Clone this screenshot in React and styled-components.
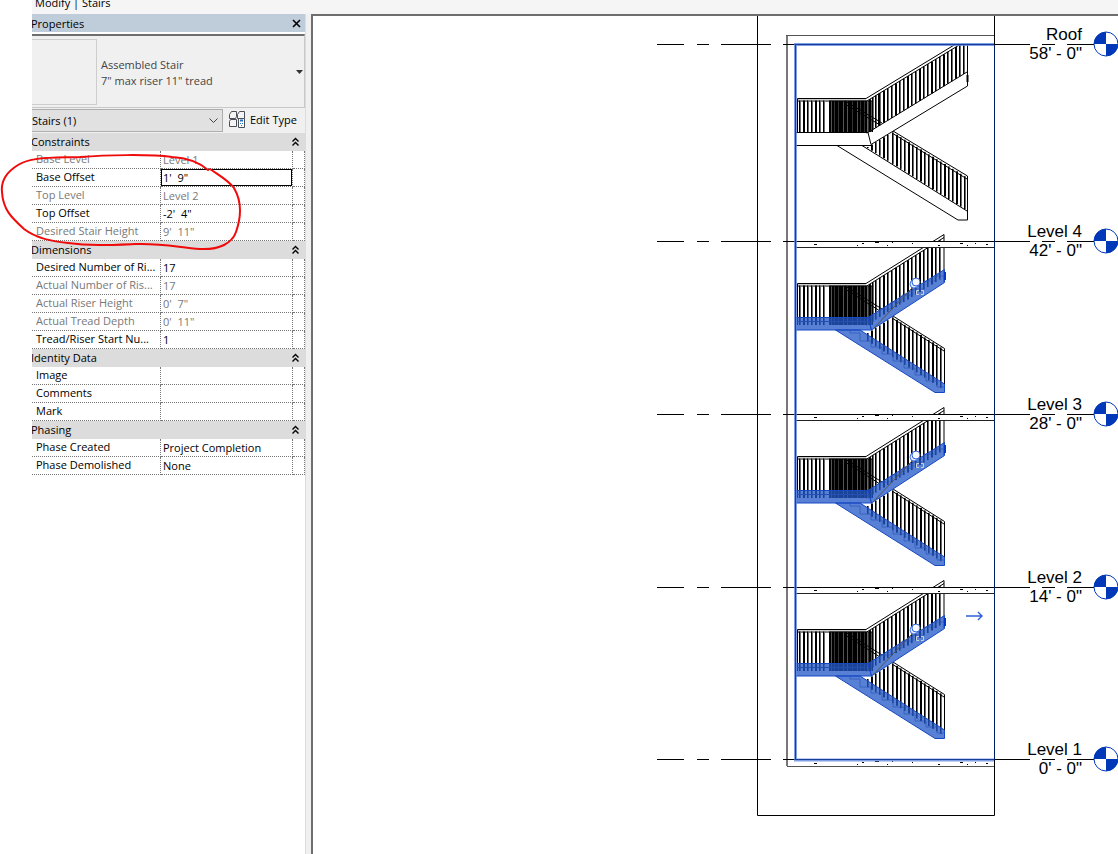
import React from 'react'
import styled, { createGlobalStyle } from 'styled-components'

//data
const groups = [
    {
        name: 'Constraints',
        rows: [
            { label: 'Base Level', value: 'Level 1', locked: true },
            { label: 'Base Offset', value: "1'  9\"", active: true },
            { label: 'Top Level', value: 'Level 2', locked: true },
            { label: 'Top Offset', value: "-2'  4\"" },
            { label: 'Desired Stair Height', value: "9'  11\"", locked: true },
        ],
    },
    {
        name: 'Dimensions',
        rows: [
            { label: 'Desired Number of Ri...', value: '17' },
            { label: 'Actual Number of Ris...', value: '17', locked: true },
            { label: 'Actual Riser Height', value: "0'  7\"", locked: true },
            { label: 'Actual Tread Depth', value: "0'  11\"", locked: true },
            { label: 'Tread/Riser Start Nu...', value: '1' },
        ],
    },
    {
        name: 'Identity Data',
        rows: [
            { label: 'Image', value: '' },
            { label: 'Comments', value: '' },
            { label: 'Mark', value: '' },
        ],
    },
    {
        name: 'Phasing',
        rows: [
            { label: 'Phase Created', value: 'Project Completion' },
            { label: 'Phase Demolished', value: 'None' },
        ],
    },
]

const levels = [
    { name: 'Roof', height: "58' - 0\"", y: 44 },
    { name: 'Level 4', height: "42' - 0\"", y: 241 },
    { name: 'Level 3', height: "28' - 0\"", y: 414 },
    { name: 'Level 2', height: "14' - 0\"", y: 587 },
    { name: 'Level 1', height: "0' - 0\"", y: 759 },
]

//styled components
const GlobalStyle = createGlobalStyle`
    * {
        box-sizing: border-box;
    }
    body {
        margin: 0;
        background: #fff;
        color: #000;
        font-family: 'Open Sans', 'Noto Sans', sans-serif;
        font-size: 11px;
        overflow: hidden;
    }
`

const Page = styled.div`
    position: relative;
    min-height: 100vh;
    padding-left: 32px;
    display: flex;
    flex-direction: column;
`

const ModeBar = styled.div`
    height: 14px;
    flex: none;
    padding: 0 0 4px 3px;
    background: #f5f5f5;
    line-height: 14px;
    display: flex;
    align-items: flex-end;
    overflow: hidden;
`

const Workspace = styled.div`
    flex: 1;
    display: flex;
    align-items: stretch;
    background: #f0f0f0;
`

const Palette = styled.section`
    width: 274px;
    flex: none;
    display: flex;
    flex-direction: column;
    background: #fff;
    border-right: 1px solid #dcdcdc;
`

const TitleBar = styled.header`
    height: 18px;
    display: flex;
    align-items: center;
    justify-content: space-between;
    padding-right: 4px;
    background: #bfcddb;
    overflow: hidden;
`

const Title = styled.h1`
    margin: 0 0 0 -1px;
    font-size: inherit;
    font-weight: 400;
`

const IconButton = styled.button`
    display: flex;
    padding: 0;
    border: 0;
    background: none;
    color: inherit;
`

const TypeSelector = styled.div`
    height: 74px;
    margin-top: 2px;
    display: flex;
    align-items: center;
    gap: 4px;
    padding-right: 1px;
    background: #f0f0f0;
    border: solid #c8c8c8;
    border-width: 0 1px 1px 0;
    border-top: 2px solid #6e6e6e;
`

const Preview = styled.div`
    width: 65px;
    height: 66px;
    border: 1px solid #cdcdcd;
    border-left: 0;
`

const TypeName = styled.div`
    flex: 1;
    padding-top: 2px;
    line-height: 16px;
    color: #444;
`

const FilterRow = styled.div`
    height: 25px;
    display: flex;
    align-items: center;
    gap: 6px;
    background: #f0f0f0;
`

const SelectBox = styled.div`
    width: 191px;
    height: 23px;
    display: flex;
    align-items: center;
    padding-right: 4px;
    background: #e1e1e1;
    border: 1px solid #adadad;
    border-left: 0;
`

const Select = styled.select`
    flex: 1;
    appearance: none;
    border: 0;
    padding: 0;
    background: none;
    color: inherit;
    font: inherit;
`

const EditType = styled.button`
    display: flex;
    align-items: center;
    gap: 4px;
    padding: 0 0 3px;
    border: 0;
    background: none;
    color: inherit;
    font: inherit;
`

const Table = styled.table`
    width: 273px;
    table-layout: fixed;
    border-collapse: separate;
    border-spacing: 0;
`

const GroupHead = styled.th`
    height: 18px;
    padding: 0 5px 1px 0;
    background: #dcdcdc;
    font-weight: 400;
    line-height: 16px;
`

const GroupLine = styled.div`
    display: flex;
    align-items: center;
    justify-content: space-between;
    overflow: hidden;

    span {
        margin-left: -1px;
    }
`

const Label = styled.th`
    height: 18px;
    padding: 0 0 1px 4px;
    border-bottom: 1px dotted #777;
    border-right: 1px dotted #777;
    font-weight: 400;
    line-height: 16px;
    text-align: left;
    white-space: nowrap;
    color: ${props => props.$locked ? '#787878' : '#000'};
`

const Cell = styled.td`
    height: 18px;
    padding: 0;
    border-bottom: 1px dotted #777;
    border-right: 1px dotted #777;
`

const Value = styled.input`
    display: block;
    width: 100%;
    height: 17px;
    padding: 0 0 1px 2px;
    border: 0;
    outline: ${props => props.$active ? '1px solid #000' : 'none'};
    outline-offset: -1px;
    background: #fff;
    color: ${props => props.$locked ? '#787878' : '#000'};
    font: inherit;
    line-height: 16px;
`

const Viewport = styled.main`
    flex: 1;
    min-width: 0;
    margin-left: 5px;
    background: #fff;
    border-top: 2px solid #6e6e6e;
    border-left: 2px solid #6e6e6e;
`

const Drawing = styled.svg`
    display: block;
    width: 100%;
    height: auto;
    font-family: 'Liberation Sans', Arial, sans-serif;
    font-size: 17px;
`

const Markup = styled.svg`
    position: absolute;
    left: 0;
    top: 150px;
    pointer-events: none;
`

const range = (from, to, step) => {
    const out = []
    for (let n = from; n <= to; n += step) out.push(n)
    return out
}

const DoubleChevron = () =>
    <svg width="9" height="10" viewBox="0 0 9 10" fill="none" stroke="#000" strokeWidth="1.4">
        <path d="M1.5 4.5 4.5 1.5 7.5 4.5M1.5 8.5 4.5 5.5 7.5 8.5" />
    </svg>

const TypeIcon = () =>
    <svg width="17" height="17" viewBox="0 0 17 17" fill="#f4f4f4" stroke="#4b4f58">
        <path d="M.5 3.5 2.5 .5H7.5V5.5L6.5 7.5H.5ZM8.5 3.5 10.5 .5H15.5V7.5H8.5ZM.5 10.5 1.5 8.5H7.5V15.5H.5Z" />
        <path d="M9.5 7.5H15.5V16.5H9.5Z" fill="#fff" />
        <path d="M11 9.5H14" stroke="#1d6fc4" strokeWidth="2" />
        <path d="M11 12.5H12M13 12.5H14M12 14.5H13" stroke="#1d6fc4" />
    </svg>

const PropertyGroup = ({ group }) =>
    <tbody>
        <tr>
            <GroupHead colSpan={3} scope="rowgroup">
                <GroupLine>
                    <span>{group.name}</span>
                    <IconButton aria-label={`Collapse ${group.name}`}><DoubleChevron /></IconButton>
                </GroupLine>
            </GroupHead>
        </tr>
        {group.rows.map(row =>
            <tr key={row.label}>
                <Label scope="row" $locked={row.locked}>{row.label}</Label>
                <Cell>
                    <Value
                        aria-label={row.label}
                        defaultValue={row.value}
                        readOnly={row.locked}
                        $locked={row.locked}
                        $active={row.active}
                    />
                </Cell>
                <Cell />
            </tr>
        )}
    </tbody>

const LevelLine = ({ level }) => {
    const y = level.y
    return (
        <g>
            <path
                d={`M657 ${y + .5}H684M697 ${y + .5}H709M721 ${y + .5}H771M783 ${y + .5}H1030M1042 ${y + .5}H1055M1067 ${y + .5}H1094`}
                stroke="#000"
            />
            <text x="1082" y={y - 4} textAnchor="end">{level.name}</text>
            <text x="1082" y={y + 15} textAnchor="end">{level.height}</text>
            <circle cx="1106" cy={y} r="12" fill="#fff" stroke="#0038b8" />
            <path d={`M1106 ${y}V${y - 12}A12 12 0 0 0 1094 ${y}ZM1106 ${y}H1118A12 12 0 0 1 1106 ${y + 12}Z`} fill="#0038b8" />
        </g>
    )
}

//balusters between a top line and a bottom line, both given as functions of x
const Balusters = ({ from, to, step = 4, top, bottom }) =>
    <g>
        {range(from, to, step).map((x, i) =>
            <g key={x}>
                <path d={`M${x + .5} ${top(x)}V${bottom(x)}`} stroke="#000" />
                <path d={`M${x + 1.5} ${top(x)}V${bottom(x)}`} stroke={i % 3 === 1 ? '#000' : '#6a6a6a'} />
            </g>
        )}
    </g>

const LandingRail = ({ y, bottom }) =>
    <g>
        <path d={`M797.5 ${bottom}V${y}H866M798 ${y + 2.5}H866`} fill="none" stroke="#000" />
        <path d={`M798 ${y + 1.5}H866`} stroke="#999" />
        <Balusters from={799} to={826} top={() => y + 2} bottom={() => bottom} />
        <path d={`M829 ${y + 2}H873V${bottom}H829Z`} fill="#000" stroke="none" />
        {[831, 834, 838, 843, 847, 852, 857, 860, 864, 868, 871].map(x =>
            <path key={x} d={`M${x + .5} ${y + 3}V${bottom}`} stroke={x % 2 ? '#555' : '#333'} />
        )}
    </g>

const RoofStair = () => {
    const upTop = x => Math.max(45, 101 - (x - 866) * .606)
    const upBottom = x => 132 - (x - 868) * .611
    const downTop = x => 133 + (x - 893) * .608
    const downBottom = x => 145 + (x - 862) * .629
    return (
        <g fill="none" stroke="#000">
            <LandingRail y={98.5} bottom={132} />
            <Balusters from={866} to={878} step={3} top={upTop} bottom={upBottom} />
            <Balusters from={879} to={964} top={upTop} bottom={upBottom} />
            <path d="M845 101 882 123M845 104 880 125" />
            <path d="M866 98.5 955 44.5M866 101.5 960 44.5M967.5 45V86L871 144.5 868 132.5 967 72" />
            <path d="M967.5 75V82" strokeWidth="2" />
            <path d="M795.5 132.5H868M795.5 145.5H871" />
            <Balusters from={867} to={888} top={x => 147 - (x - 867) * .606} bottom={downBottom} />
            <Balusters from={892} to={964} top={downTop} bottom={downBottom} />
            <path d="M893 131 967.5 176V220H958L837 145.5M892 133 967 179M862 145.5 967 211" />
        </g>
    )
}

const SelectedStair = ({ dy }) => {
    const upTop = x => 286 - (x - 866) * .63
    const upBottom = x => 324 - (x - 868) * .626
    const downTop = x => 318 + (x - 893) * .625
    const downBottom = x => 338 + (x - 862) * .64
    return (
        <g transform={`translate(0 ${dy})`} fill="none" stroke="#000">
            <LandingRail y={283.5} bottom={325} />
            <Balusters from={866} to={876} step={3} top={upTop} bottom={upBottom} />
            <Balusters from={879} to={942} top={upTop} bottom={upBottom} />
            <path d="M866 283.5 944 234.5V282M866 286.5 944 237.5" />
            <path d="M845 286 882 309M845 289 880 311" />
            <Balusters from={867} to={888} top={x => 333 - (x - 867) * .64} bottom={downBottom} />
            <Balusters from={892} to={942} top={downTop} bottom={downBottom} />
            <path d="M893 316 944.5 348.5V392M892 318 944 351" />
            <g fill="#2458c8" fillOpacity=".76" stroke="#1648c4">
                <path d="M795.5 317.5H868L871.5 330H795.5Z" />
                <path d="M868 317.5 944.5 269.5V282.5L871.5 330Z" />
                <path d="M835.5 330H860L944.5 384V392.5H935Z" />
            </g>
            <path
                d="M850 330V333H860V341H871V347H882V354H893V361H904V368H915V375H926V381H937V387H944M880 314V309H891V302H902V295H913V289H924V281H935V276H944"
                stroke="#2450b4"
                strokeOpacity=".6"
            />
            <path d="M797 321.5H866" stroke="#2450b4" />
            <path d="M945 272V280" stroke="#0038c8" strokeWidth="2" />
            <path d="M873 329 912 288" stroke="#555" />
            <circle cx="914" cy="284" r="4" stroke="#4c7be0" fill="#dfe9ff" />
            <circle cx="916" cy="282" r="4" stroke="#2f62d8" fill="#f4f8ff" />
            <path d="M919 290.5H916.5V294.5H919M921 290.5H923.5V294.5H921" stroke="#c8d0d8" />
        </g>
    )
}

const Slab = ({ y }) =>
    <g>
        <path d={`M796 ${y}H994V${y + 6}H796Z`} fill="#fff" />
        <path d={`M796 ${y + 6.5}H994`} stroke="#222" />
        <path
            d={`M814 ${y + 3.5}h3M857 ${y + 4.5}h1M862 ${y + 2.5}h2M887 ${y + 4.5}h1M875 ${y + 1.5}h4M892 ${y + 1.5}h1M912 ${y + 2.5}h1M938 ${y + 4.5}h2M960 ${y + 2.5}h3M967 ${y + 4.5}h1M975 ${y + 2.5}h1M986 ${y + 3.5}h2`}
            stroke="#000"
        />
    </g>

const Section = () =>
    <Drawing viewBox="313 16 805 838" role="img" aria-label="Stair section">
        <path d="M787 766V35" stroke="#777" strokeWidth="2" />
        <path d="M786 35.5H994" stroke="#555" />
        <RoofStair />
        {[0, 173, 346].map(dy => <SelectedStair key={dy} dy={dy} />)}
        {[241, 414, 587, 760].map(y => <Slab key={y} y={y} />)}
        <path d="M787 766.5H994" stroke="#555" />
        {levels.map(level => <LevelLine key={level.name} level={level} />)}
        <path d="M994 44.5H795.5V760H994" fill="none" stroke="#5f86dc" strokeOpacity=".8" strokeWidth="3" />
        <path d="M994 44.5H795.5V759.5H994" fill="none" stroke="#163f9c" />
        <path d="M757.5 16V815.5H994.5V16" fill="none" stroke="#000" />
        <path d="M994.5 45V760" stroke="#001c66" />
        <path d="M966 616H982M978 612 982 616 978 620" fill="none" stroke="#2f62d8" strokeWidth="1.4" />
    </Drawing>

const App = () =>
    <Page>
        <GlobalStyle />
        <ModeBar>Modify | Stairs</ModeBar>
        <Workspace>
            <Palette>
                <TitleBar>
                    <Title>Properties</Title>
                    <IconButton aria-label="Close">
                        <svg width="9" height="9" viewBox="0 0 9 9" stroke="#000" strokeWidth="1.6">
                            <path d="M1 1 8 8M8 1 1 8" />
                        </svg>
                    </IconButton>
                </TitleBar>
                <TypeSelector>
                    <Preview />
                    <TypeName>Assembled Stair<br />7" max riser 11" tread</TypeName>
                    <IconButton aria-label="Change type">
                        <svg width="7" height="4" viewBox="0 0 7 4"><path d="M0 0H7L3.5 4Z" fill="#333" /></svg>
                    </IconButton>
                </TypeSelector>
                <FilterRow>
                    <SelectBox>
                        <Select aria-label="Selection filter">
                            <option>Stairs (1)</option>
                        </Select>
                        <svg width="9" height="6" viewBox="0 0 9 6" fill="none" stroke="#444">
                            <path d="M.5 .5 4.5 4.5 8.5 .5" />
                        </svg>
                    </SelectBox>
                    <EditType><TypeIcon />Edit Type</EditType>
                </FilterRow>
                <Table>
                    <colgroup>
                        <col style={{ width: 129 }} />
                        <col />
                        <col style={{ width: 12 }} />
                    </colgroup>
                    {groups.map(group => <PropertyGroup key={group.name} group={group} />)}
                </Table>
            </Palette>
            <Viewport>
                <Section />
            </Viewport>
        </Workspace>
        <Markup width="250" height="110" viewBox="0 150 250 110" fill="none" stroke="#f00a0a" strokeWidth="2" strokeLinecap="round">
            <path d="M208 170C200 163 190 158 172 157C150 154 105 155 80 157C50 158 30 157 18 165C5 173 1 183 2 192C3 210 12 218 24 229C36 238 50 241 68 243C90 246 110 245 135 244C165 243 180 248 200 249C220 250 232 243 236 232C242 215 241 200 234 188C228 180 220 176 210 169" />
        </Markup>
    </Page>

export default App
